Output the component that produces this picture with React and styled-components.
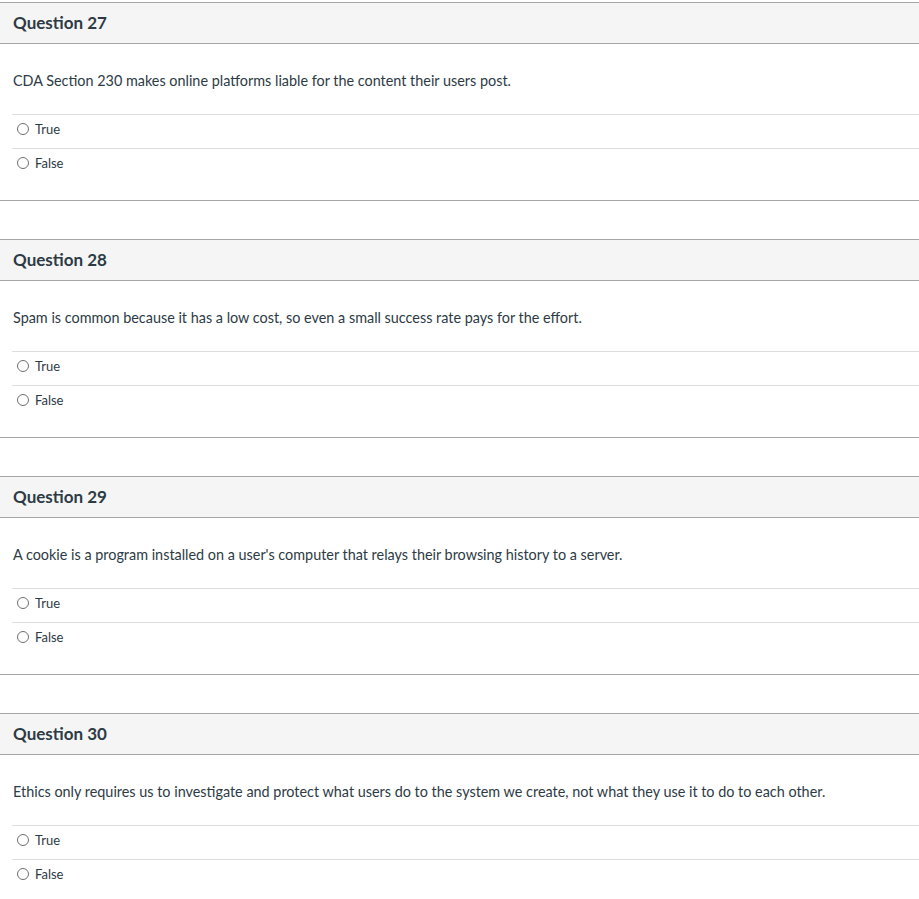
import React from "react";
import styled, { createGlobalStyle } from "styled-components";

const Global = createGlobalStyle`
  html, body { margin: 0; padding: 0; background: #fff; }
  body { font-family: Lato, "Helvetica Neue", Arial, sans-serif; color: #2d3b45; }
`;

const Page = styled.div`
  display: flex;
  flex-direction: column;
  gap: 38px;
  padding-top: 2px;
`;

const Card = styled.section`
  border-top: 1px solid #a5a5a5;
  border-bottom: 1px solid #a5a5a5;
  background: #fff;
`;

const Header = styled.div`
  height: 38px;
  padding: 0 0 2px 13px;
  background: #f5f5f5;
  border-bottom: 1px solid #a5a5a5;
  display: flex;
  align-items: center;
`;

const Title = styled.h2`
  margin: 0;
  font-family: Lato, sans-serif;
  font-weight: 700;
  font-size: 17px;
  color: #2d3b45;
`;

const Body = styled.div`
  padding: 27px 0 18px 0;
`;

const Prompt = styled.p`
  margin: 0 0 23px 13px;
  font-size: 14.4px;
  line-height: 20px;
  color: #2d3b45;
`;

const Answers = styled.div`
  margin-left: 12px;
  display: flex;
  flex-direction: column;
`;

const Answer = styled.label`
  display: flex;
  align-items: center;
  height: 16px;
  padding: 6px 0 11px 0;
  border-top: 1px solid #dddddd;
  font-size: 13px;
  line-height: 16px;
  color: #2d3b45;
  cursor: pointer;
`;

const Radio = styled.span`
  width: 10px;
  height: 10px;
  border: 1px solid #707070;
  border-radius: 50%;
  margin: -1px 6px 0 5px;
  flex: none;
`;

const questions = [
  { n: 27, text: "CDA Section 230 makes online platforms liable for the content their users post." },
  { n: 28, text: "Spam is common because it has a low cost, so even a small success rate pays for the effort." },
  { n: 29, text: "A cookie is a program installed on a user's computer that relays their browsing history to a server." },
  { n: 30, text: "Ethics only requires us to investigate and protect what users do to the system we create, not what they use it to do to each other." },
];

export default function App() {
  return (
    <>
      <Global />
      <Page>
        {questions.map((q) => (
          <Card key={q.n}>
            <Header>
              <Title>Question {q.n}</Title>
            </Header>
            <Body>
              <Prompt>{q.text}</Prompt>
              <Answers>
                {["True", "False"].map((a) => (
                  <Answer key={a}>
                    <Radio />
                    {a}
                  </Answer>
                ))}
              </Answers>
            </Body>
          </Card>
        ))}
      </Page>
    </>
  );
}
